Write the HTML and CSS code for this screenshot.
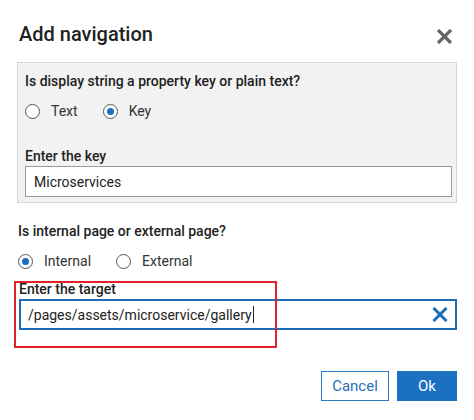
FILE: index.html
```html
<!DOCTYPE html>
<html>
<head>
<meta charset="utf-8">
<link rel="stylesheet" href="styles.css">
</head>
<body>
<div class="dialog">
  <div class="header">
    <h1 class="title">Add navigation</h1>
    <svg class="close" width="17" height="15" viewBox="0 0 17 15"><path d="M2 1 L15 14 M15 1 L2 14" stroke="#666" stroke-width="3.2" fill="none"/></svg>
  </div>

  <div class="keybox">
    <div class="question">Is display string a property key or plain text?</div>
    <div class="radios">
      <span class="radio"><span class="circle"></span><span class="rlabel">Text</span></span>
      <span class="radio"><span class="circle checked"></span><span class="rlabel">Key</span></span>
    </div>
    <div class="label key-label">Enter the key</div>
    <div class="input gray">Microservices</div>
  </div>

  <div class="section">
    <div class="question">Is internal page or external page?</div>
    <div class="radios">
      <span class="radio"><span class="circle checked"></span><span class="rlabel">Internal</span></span>
      <span class="radio"><span class="circle"></span><span class="rlabel">External</span></span>
    </div>
  </div>

  <div class="target">
    <div class="label">Enter the target</div>
    <div class="input blue"><span class="value">/pages/assets/microservice/gallery<span class="caret"></span></span>
      <svg class="clear" width="16" height="15" viewBox="0 0 16 15"><path d="M1.5 1 L14.5 14 M14.5 1 L1.5 14" stroke="#1d6db6" stroke-width="3" fill="none"/></svg>
    </div>
    <div class="highlight"></div>
  </div>

  <div class="buttons">
    <button class="btn cancel">Cancel</button>
    <button class="btn ok">Ok</button>
  </div>
</div>
</body>
</html>
```
FILE: styles.css
```css
html, body {
  margin: 0;
  padding: 0;
  background: #ffffff;
}
body {
  font-family: Roboto, "Liberation Sans", sans-serif;
  color: #222;
  width: 474px;
  height: 420px;
  overflow: hidden;
}
.dialog {
  padding: 20px 17px 0 0;
}
.header {
  display: flex;
  align-items: center;
  justify-content: space-between;
  padding-left: 19px;
  padding-right: 4px;
  height: 28px;
}
.title {
  margin: 0;
  font-size: 20px;
  line-height: 28px;
  font-weight: 500;
  color: #222;
}
.close {
  display: block;
  margin-top: 4px;
}
.keybox {
  margin: 14px 0 0 17px;
  border: 1px dotted #b9b9b9;
  background: #f2f2f2;
  padding: 8px 4px 5px 7px;
}
.question {
  font-size: 14px;
  line-height: 20px;
  font-weight: 500;
  color: #222;
}
.radios {
  display: flex;
  margin-top: 10px;
  height: 20px;
  align-items: center;
}
.radio {
  display: flex;
  align-items: center;
}
.radio + .radio {
  margin-left: 25px;
}
.circle {
  width: 15px;
  height: 15px;
  box-sizing: border-box;
  border: 1px solid #555;
  border-radius: 50%;
  background: #fff;
  display: flex;
  align-items: center;
  justify-content: center;
}
.circle.checked::after {
  content: "";
  width: 7px;
  height: 7px;
  border-radius: 50%;
  background: #1a6fc0;
}
.rlabel {
  margin-left: 11px;
  font-size: 14px;
  line-height: 20px;
  color: #333;
}
.label {
  font-size: 14px;
  line-height: 20px;
  font-weight: 500;
  color: #222;
}
.key-label {
  margin-top: 25px;
}
.input {
  box-sizing: border-box;
  height: 31px;
  display: flex;
  align-items: center;
  font-size: 14px;
  color: #222;
  background: #fff;
}
.input.gray {
  border: 1px solid #9a9a9a;
  padding-left: 8px;
}
.section {
  margin: 18px 0 0 18px;
}
.target {
  position: relative;
  margin: 8px 0 0 19px;
}
.input.blue {
  border: 2px solid #1d6db6;
  padding: 0 7px 0 7px;
  justify-content: space-between;
  font-size: 14px;
}
.value {
  display: flex;
  align-items: center;
}
.caret {
  display: inline-block;
  width: 1px;
  height: 17px;
  background: #222;
  margin-left: 1px;
}
.clear {
  display: block;
}
.highlight {
  position: absolute;
  left: -5px;
  top: 2px;
  width: 263px;
  height: 67px;
  box-sizing: border-box;
  border: 2px solid #e0232b;
  pointer-events: none;
}
.buttons {
  display: flex;
  justify-content: flex-end;
  gap: 8px;
  margin-top: 41px;
}
.btn {
  font-family: Roboto, "Liberation Sans", sans-serif;
  font-size: 15px;
  height: 30px;
  box-sizing: border-box;
  padding: 0;
  cursor: pointer;
}
.cancel {
  width: 68px;
  background: #fff;
  border: 1px solid #2a78c2;
  color: #2a6fb5;
}
.ok {
  width: 60px;
  background: #1b70c1;
  border: 1px solid #1b70c1;
  color: #fff;
}
```
